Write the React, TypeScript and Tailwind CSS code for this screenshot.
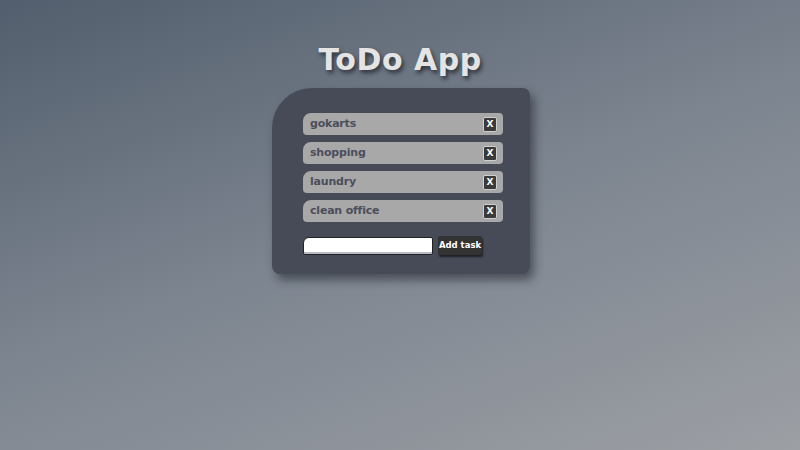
import { useState } from 'react'

const font = { fontFamily: '"DejaVu Sans", Verdana, sans-serif' }

export default function App() {
  const [tasks, setTasks] = useState(['gokarts', 'shopping', 'laundry', 'clean office'])
  const [draft, setDraft] = useState('')

  const addTask = () => {
    if (!draft.trim()) return
    setTasks([...tasks, draft.trim()])
    setDraft('')
  }

  return (
    <div
      className="min-h-screen w-full bg-[linear-gradient(160deg,#525e6d_0%,#7d8590_50%,#9c9fa4_100%)] flex flex-col items-center"
      style={font}
    >
      <h1 className="mt-[40px] h-[40px] text-[30px] font-bold leading-[40px] text-[#e4e4e4] tracking-[0.5px] [text-shadow:2px_3px_4px_#2e333b]">
        ToDo App
      </h1>

      <div className="mt-[8px] ml-[2px] w-[258px] rounded-tl-[40px] rounded-tr-[7px] rounded-b-[8px] bg-[#474b58] pt-[25px] pb-[19px] pl-[31px] pr-[27px] shadow-[4px_6px_10px_rgba(30,33,40,0.55)]">
        <ul className="flex flex-col gap-[7px]">
          {tasks.map((t) => (
            <li
              key={t}
              className="flex h-[22px] items-center justify-between rounded-tl-[8px] rounded-[4px] bg-[#a8a8a8] pl-[7px] pr-[6px]"
            >
              <span className="text-[11px] font-bold tracking-[-0.2px] text-[#4b4e5b]">{t}</span>
              <button
                onClick={() => setTasks(tasks.filter((x) => x !== t))}
                className="flex h-[15px] w-[14px] items-center justify-center rounded-[2px] border border-[#cfcfcf] bg-[#3a3a3a] text-[9px] font-bold leading-none text-white"
              >
                X
              </button>
            </li>
          ))}
        </ul>

        <div className="mt-[14px] flex items-center gap-[5px]">
          <input
            value={draft}
            onChange={(e) => setDraft(e.target.value)}
            className="h-[18px] w-[130px] rounded-tl-[6px] rounded-[2px] border border-[#222] bg-white px-1 text-[10px] outline-none shadow-[inset_0_-2px_0_#b9bcc4]"
          />
          <button
            onClick={addTask}
            className="h-[19px] w-[44px] rounded-[2px] bg-[#333333] text-[8.5px] font-bold text-white shadow-[1px_2px_2px_#1e1f24]"
          >
            Add task
          </button>
        </div>
      </div>
    </div>
  )
}
